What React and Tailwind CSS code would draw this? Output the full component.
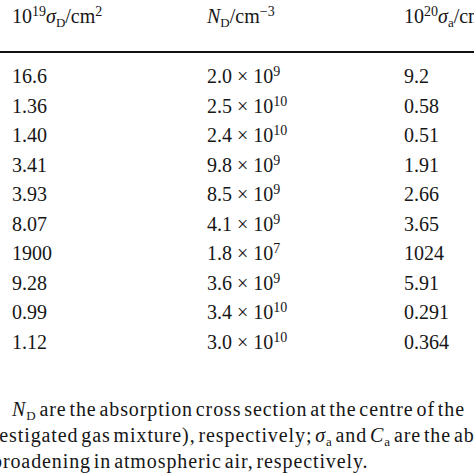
const rows = [
  ['16.6', '2.0', '9', '9.2'],
  ['1.36', '2.5', '10', '0.58'],
  ['1.40', '2.4', '10', '0.51'],
  ['3.41', '9.8', '9', '1.91'],
  ['3.93', '8.5', '9', '2.66'],
  ['8.07', '4.1', '9', '3.65'],
  ['1900', '1.8', '7', '1024'],
  ['9.28', '3.6', '9', '5.91'],
  ['0.99', '3.4', '10', '0.291'],
  ['1.12', '3.0', '10', '0.364'],
];

// plain spans so preflight's sup/sub offsets don't stack on top
function Sup({ children }) {
  return <span className="text-[14px] align-[7px] leading-none">{children}</span>;
}

function Sub({ children }) {
  return <span className="text-[13px] align-[-4px] leading-none">{children}</span>;
}

export default function App() {
  return (
    <div className="w-[474px] h-[474px] overflow-hidden bg-white text-[#161616] whitespace-nowrap font-['Liberation_Serif','Times_New_Roman',serif]">
      <div className="text-[20px] leading-[29px]">
        <div className="flex pl-[12px] h-[31px] pt-[2px]">
          <div className="w-[195px] shrink-0">
            10<Sup>19</Sup><i>σ</i><Sub>D</Sub>/cm<Sup>2</Sup>
          </div>
          <div className="w-[197px] shrink-0">
            <i>N</i><Sub>D</Sub>/cm<Sup>−3</Sup>
          </div>
          <div className="shrink-0">
            10<Sup>20</Sup><i>σ</i><Sub>a</Sub>/cm<Sup>2</Sup>
          </div>
        </div>

        <div className="mt-[20px] h-[2px] bg-[#111]" />

        <div className="mt-[9px] leading-[29.5px]">
          {rows.map((r) => (
            <div key={r[0]} className="flex pl-[12px] h-[29.5px]">
              <div className="w-[195px] shrink-0">{r[0]}</div>
              <div className="w-[197px] shrink-0">
                {r[1]} × 10<Sup>{r[2]}</Sup>
              </div>
              <div className="shrink-0">{r[3]}</div>
            </div>
          ))}
        </div>
      </div>

      <div className="mt-[39px] text-[20px] leading-[26px] tracking-[0.9px] [word-spacing:-3px]">
        <div className="pl-[12px] h-[26px]">
          <i>N</i><Sub>D</Sub> are the absorption cross section at the centre of the
        </div>
        <div className="-ml-[29px] h-[26px]">
          investigated gas mixture), respectively; <i>σ</i><Sub>a</Sub> and <i>C</i><Sub>a</Sub> are the absorption
        </div>
        <div className="-ml-[8px] h-[26px]">broadening in atmospheric air, respectively.</div>
      </div>
    </div>
  );
}
